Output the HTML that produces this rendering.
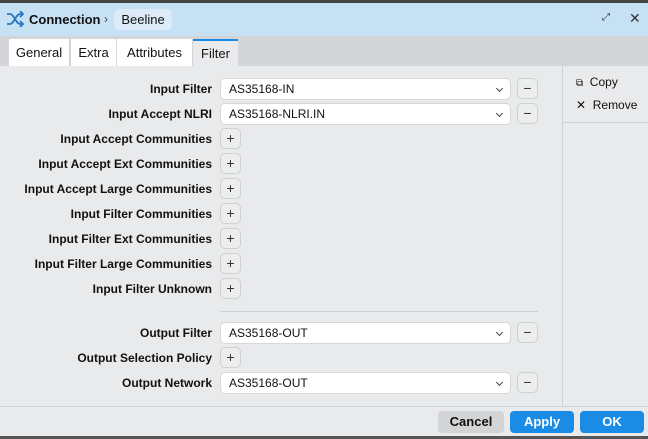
<!DOCTYPE html><html><head><style>
*{box-sizing:border-box;margin:0;padding:0}
body{width:648px;height:439px;overflow:hidden;background:#e9eaec;font-family:"Liberation Sans",sans-serif;font-size:12px;color:#111;position:relative}
.top{position:absolute;left:0;top:0;width:648px;height:3px;background:#444}
.title{position:absolute;left:0;top:3px;width:648px;height:33px;background:#c6e1f4}
.tabs{position:absolute;left:0;top:36px;width:648px;height:30px;background:#d3d5d8}
.tab{position:absolute;top:3px;height:27px;background:#fff;line-height:27px;text-align:center;font-size:13px}
.lbl{position:absolute;right:436px;font-weight:bold;font-size:12px;text-align:right;white-space:nowrap}
.inp{position:absolute;left:220px;width:291px;height:22px;background:#fff;border:1px solid #d8d8d8;border-radius:5px;padding-left:8px;line-height:20px;font-size:12px}
.inp:after{content:"";position:absolute;right:8px;top:7px;width:4px;height:4px;border-right:1px solid #444;border-bottom:1px solid #444;transform:rotate(45deg)}
.btn{position:absolute;width:21px;height:21px;border:1px solid #cfd0d2;border-radius:5px;background:#eceded;text-align:center;line-height:18px;font-size:14px;color:#333}
.fb{position:absolute;top:411px;height:22px;border-radius:4px;font-weight:bold;font-size:13px;line-height:22px;text-align:center}
</style></head><body>
<div class="top"></div>
<div class="title">
<svg style="position:absolute;left:6px;top:8px" width="18" height="16" viewBox="0 0 18 16" fill="none" stroke="#2a78c2" stroke-width="1.8"><path d="M1 3h3c4 0 6 10 10 10h3M1 13h3c4 0 6-10 10-10h3M14 0l3 3-3 3M14 10l3 3-3 3"/></svg>
<div style="position:absolute;left:29px;top:9px;font-weight:bold;font-size:13px">Connection</div>
<div style="position:absolute;left:104px;top:9px;font-size:12px;color:#444">›</div>
<div style="position:absolute;left:114px;top:6px;width:58px;height:21px;background:#dcebf7;border-radius:5px;line-height:21px;text-align:center;font-size:13px">Beeline</div>
<div style="position:absolute;left:602px;top:9px;font-size:10px;color:#333">⤢</div>
<div style="position:absolute;left:629px;top:7px;font-size:14px;color:#333">✕</div>
</div>
<div class="tabs">
<div class="tab" style="left:9px;width:60px">General</div>
<div class="tab" style="left:71px;width:45px">Extra</div>
<div class="tab" style="left:117px;width:75px">Attributes</div>
<div class="tab" style="left:193px;width:45px;background:#e9eaec;border-top:2px solid #1a8ce6;line-height:25px">Filter</div>
</div>
<div style="position:absolute;left:562px;top:66px;width:1px;height:340px;background:#d0d1d3"></div>
<div style="position:absolute;left:563px;top:122px;width:85px;height:1px;background:#d0d1d3"></div>
<div style="position:absolute;left:576px;top:75px;font-size:12px"><span style="font-size:10px">⧉</span>&nbsp; Copy</div>
<div style="position:absolute;left:576px;top:98px;font-size:12px">✕&nbsp; Remove</div>

<div class="lbl" style="top:82px">Input Filter</div>
<div class="inp" style="top:78px">AS35168-IN</div><div class="btn" style="left:517px;top:78px">−</div>
<div class="lbl" style="top:107px">Input Accept NLRI</div>
<div class="inp" style="top:103px">AS35168-NLRI.IN</div><div class="btn" style="left:517px;top:103px">−</div>
<div class="lbl" style="top:132px">Input Accept Communities</div><div class="btn" style="left:220px;top:128px">+</div>
<div class="lbl" style="top:157px">Input Accept Ext Communities</div><div class="btn" style="left:220px;top:153px">+</div>
<div class="lbl" style="top:182px">Input Accept Large Communities</div><div class="btn" style="left:220px;top:178px">+</div>
<div class="lbl" style="top:207px">Input Filter Communities</div><div class="btn" style="left:220px;top:203px">+</div>
<div class="lbl" style="top:232px">Input Filter Ext Communities</div><div class="btn" style="left:220px;top:228px">+</div>
<div class="lbl" style="top:257px">Input Filter Large Communities</div><div class="btn" style="left:220px;top:253px">+</div>
<div class="lbl" style="top:282px">Input Filter Unknown</div><div class="btn" style="left:220px;top:278px">+</div>
<div style="position:absolute;left:220px;top:311px;width:318px;height:1px;background:#cfd0d2"></div>
<div class="lbl" style="top:326px">Output Filter</div>
<div class="inp" style="top:322px">AS35168-OUT</div><div class="btn" style="left:517px;top:322px">−</div>
<div class="lbl" style="top:351px">Output Selection Policy</div><div class="btn" style="left:220px;top:347px">+</div>
<div class="lbl" style="top:376px">Output Network</div>
<div class="inp" style="top:372px">AS35168-OUT</div><div class="btn" style="left:517px;top:372px">−</div>

<div style="position:absolute;left:0;top:406px;width:648px;height:1px;background:#d0d1d3"></div>
<div class="fb" style="left:438px;width:66px;background:#d3d4d6">Cancel</div>
<div class="fb" style="left:510px;width:64px;background:#1a8ce6;color:#fff">Apply</div>
<div class="fb" style="left:580px;width:64px;background:#1a8ce6;color:#fff">OK</div>
<div style="position:absolute;left:0;top:436px;width:648px;height:3px;background:#555"></div>
</body></html>
